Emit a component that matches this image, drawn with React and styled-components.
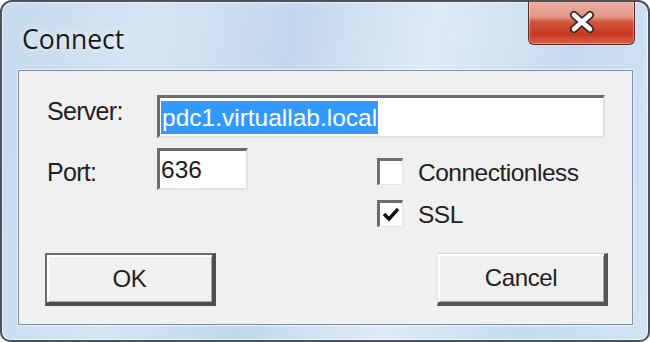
import React from "react";
import styled, { createGlobalStyle } from "styled-components";

const GlobalStyle = createGlobalStyle`
  html, body {
    margin: 0;
    padding: 0;
    background: #ffffff;
  }
  * {
    box-sizing: border-box;
  }
`;

const Window = styled.div`
  width: 650px;
  height: 342px;
  display: flex;
  flex-direction: column;
  border: 2px solid #4b5158;
  border-radius: 12px 12px 10px 10px;
  background: linear-gradient(
    100deg,
    #c6d9ee 0%,
    #d6e5f4 22%,
    #c3d8ed 42%,
    #dfebf7 62%,
    #c7dcf0 82%,
    #d3e4f4 100%
  );
  box-shadow: inset 0 0 0 1px rgba(255, 255, 255, 0.65);
  overflow: hidden;
`;

const TitleBar = styled.div`
  height: 68px;
  display: flex;
  justify-content: space-between;
  align-items: flex-start;
  padding: 0 13px 0 20px;
`;

const Title = styled.div`
  margin-top: 19px;
  font-family: "Open Sans", "Noto Sans", sans-serif;
  font-size: 26.5px;
  color: #1b1b1b;
  text-shadow: 0 0 8px rgba(255, 255, 255, 0.9);
`;

const CloseButton = styled.div`
  width: 107px;
  height: 45px;
  margin-top: -2px;
  display: flex;
  align-items: center;
  justify-content: center;
  border: 1px solid #5b2a24;
  border-top: none;
  border-radius: 0 0 6px 6px;
  background: linear-gradient(
    #ebb3a8 0%,
    #e39585 38%,
    #d1563c 50%,
    #c8361f 78%,
    #d5644a 100%
  );
  box-shadow: inset 0 0 0 1px rgba(255, 255, 255, 0.35);
`;

const Client = styled.div`
  flex: 1;
  margin: 0 15px 15px 16px;
  display: flex;
  flex-direction: column;
  padding: 24px 27px 18px 0;
  background: #f0f0f0;
  border: 1px solid #7f8e9d;
  box-shadow: 0 0 0 1px rgba(255, 255, 255, 0.55);
`;

const Row = styled.div`
  display: flex;
  align-items: flex-start;
  margin-top: ${({ $gap }) => $gap || 0}px;
`;

const Label = styled.div`
  width: 138px;
  padding-left: 28px;
  margin-top: ${({ $top }) => $top}px;
  font-family: "Liberation Sans", Arial, sans-serif;
  font-size: 25px;
  letter-spacing: -0.7px;
  line-height: 26px;
  color: #222222;
`;

const TextBox = styled.div`
  width: ${({ $width }) => ($width ? `${$width}px` : "auto")};
  flex: ${({ $width }) => ($width ? "none" : 1)};
  height: ${({ $height }) => $height}px;
  display: flex;
  align-items: center;
  padding-left: 1px;
  background: #ffffff;
  border-top: 3px solid #6c6c6c;
  border-left: 3px solid #6c6c6c;
  border-right: 2px solid #e2e2e2;
  border-bottom: 2px solid #e2e2e2;
  font-family: "Liberation Sans", Arial, sans-serif;
  font-size: 24.5px;
  color: #1e1e1e;
`;

const Selected = styled.span`
  display: inline-block;
  line-height: 33px;
  padding: 0 1px;
  background: #3399ff;
  color: #ffffff;
`;

const Options = styled.div`
  margin-left: 129px;
  margin-top: 7px;
  display: flex;
  flex-direction: column;
  gap: 10px;
`;

const Option = styled.label`
  display: flex;
  align-items: center;
  gap: 15px;
  font-family: "Liberation Sans", Arial, sans-serif;
  font-size: 24.5px;
  letter-spacing: -0.5px;
  color: #222222;
  span {
    margin-top: 4px;
  }
`;

const Box = styled.div`
  width: 26px;
  height: 27px;
  display: flex;
  align-items: center;
  justify-content: center;
  background: #ffffff;
  border-top: 3px solid #6e6e6e;
  border-left: 3px solid #6e6e6e;
  border-right: 1px solid #e4e4e4;
  border-bottom: 1px solid #e4e4e4;
`;

const Buttons = styled.div`
  margin-top: auto;
  display: flex;
  justify-content: space-between;
  padding: 0 0 0 26px;
  margin-right: -3px;
`;

const Button = styled.div`
  width: 171px;
  height: 53px;
  display: flex;
  align-items: center;
  justify-content: center;
  background: #f0f0f0;
  border-style: solid;
  border-width: ${({ $default }) => ($default ? "2px 4px 4px 2px" : "1px 4px 4px 1px")};
  border-color: ${({ $default }) =>
    $default ? "#6a6a6a #4f4f4f #4f4f4f #6a6a6a" : "#cfcfcf #555555 #555555 #e6e6e6"};
  box-shadow: inset 2px 2px 0 #ffffff, inset -1px -1px 0 #a8a8a8;
  font-family: "Liberation Sans", Arial, sans-serif;
  font-size: 24px;
  letter-spacing: -0.4px;
  color: #222222;
`;

function CloseGlyph() {
  return (
    <svg width="30" height="24" viewBox="0 0 30 24">
      <path d="M7 5 L23 19 M23 5 L7 19" stroke="#3a2a28" strokeWidth="8" strokeLinecap="round" />
      <path d="M7 5 L23 19 M23 5 L7 19" stroke="#ffffff" strokeWidth="4.5" strokeLinecap="round" />
    </svg>
  );
}

function Check() {
  return (
    <svg width="18" height="16" viewBox="0 0 18 16">
      <path d="M2 8 L7 13 L16 3" fill="none" stroke="#111111" strokeWidth="3.4" />
    </svg>
  );
}

export default function App() {
  return (
    <>
      <GlobalStyle />
      <Window>
        <TitleBar>
          <Title>Connect</Title>
          <CloseButton>
            <CloseGlyph />
          </CloseButton>
        </TitleBar>
        <Client>
          <Row>
            <Label $top={3}>Server:</Label>
            <TextBox $height={43}>
              <Selected>pdc1.virtuallab.local</Selected>
            </TextBox>
          </Row>
          <Row $gap={10}>
            <Label $top={11}>Port:</Label>
            <TextBox $width={91} $height={42}>
              636
            </TextBox>
            <Options>
              <Option>
                <Box />
                <span>Connectionless</span>
              </Option>
              <Option>
                <Box>
                  <Check />
                </Box>
                <span>SSL</span>
              </Option>
            </Options>
          </Row>
          <Buttons>
            <Button $default>OK</Button>
            <Button>Cancel</Button>
          </Buttons>
        </Client>
      </Window>
    </>
  );
}
